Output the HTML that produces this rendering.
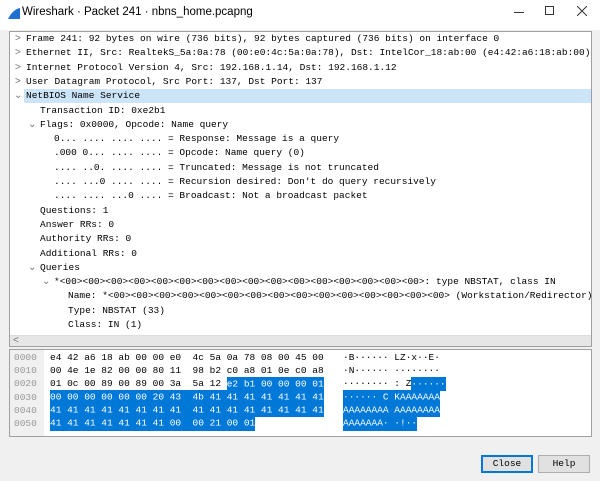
<!DOCTYPE html>
<html><head><style>
*{margin:0;padding:0;box-sizing:border-box}
body{width:600px;height:481px;background:#f0f0f0;position:relative;overflow:hidden;font-family:"Liberation Mono",monospace;font-size:9.5px;color:#000}
#title{position:absolute;left:0;top:0;width:600px;height:30px;background:#fff;font-family:"Liberation Sans",sans-serif;font-size:11.5px}
#title .t{position:absolute;left:22px;top:6px;color:#000}
#tree{position:absolute;left:9px;top:31px;width:583px;height:316px;background:#fff;border:1px solid #a0a0a0;overflow:hidden}
.r{position:absolute;height:14px;line-height:14px;white-space:pre}
.sel{background:#cce4f7}
.ch{position:absolute;color:#777;font-family:"Liberation Sans",sans-serif;font-size:10px}
#hs{position:absolute;left:0;bottom:0;width:581px;height:11px;background:#e6e6e6;border-top:1px solid #ddd}
#hex{position:absolute;left:9px;top:349px;width:583px;height:88px;background:#fff;border:1px solid #a0a0a0;overflow:hidden}
#off{position:absolute;left:0;top:0;width:34px;height:86px;background:#f0f0f0}
.h{position:absolute;white-space:pre;line-height:13.2px}
.b{background:#0078d7;color:#fff;padding:1.6px 0}
.btn{position:absolute;top:455px;width:52px;height:18px;background:#e1e1e1;border:1px solid #adadad;font-size:9.5px;text-align:center;line-height:16px}
</style></head><body>
<div id="title">
<svg style="position:absolute;left:7px;top:7px" width="14" height="13"><path d="M1 12 L13 12 L13 1 C8 2 4 6 1 12Z" fill="#1e6fd0"/></svg>
<span class="t">Wireshark · Packet 241 · nbns_home.pcapng</span>
<div style="position:absolute;left:514px;top:12px;width:10px;height:1px;background:#333"></div>
<div style="position:absolute;left:545px;top:6px;width:9px;height:9px;border:1px solid #333"></div>
<svg style="position:absolute;left:577px;top:6px" width="10" height="10"><path d="M0 0L10 10M10 0L0 10" stroke="#333" stroke-width="1"/></svg>
</div>
<div id="tree">
<div class="r" style="top:0;left:0;width:581px"><span class="ch" style="left:5px">&gt;</span><span style="position:absolute;left:16px">Frame 241: 92 bytes on wire (736 bits), 92 bytes captured (736 bits) on interface 0</span></div>
<div class="r" style="top:14.3px;left:0;width:581px"><span class="ch" style="left:5px">&gt;</span><span style="position:absolute;left:16px">Ethernet II, Src: RealtekS_5a:0a:78 (00:e0:4c:5a:0a:78), Dst: IntelCor_18:ab:00 (e4:42:a6:18:ab:00)</span></div>
<div class="r" style="top:28.6px;left:0;width:581px"><span class="ch" style="left:5px">&gt;</span><span style="position:absolute;left:16px">Internet Protocol Version 4, Src: 192.168.1.14, Dst: 192.168.1.12</span></div>
<div class="r" style="top:42.9px;left:0;width:581px"><span class="ch" style="left:5px">&gt;</span><span style="position:absolute;left:16px">User Datagram Protocol, Src Port: 137, Dst Port: 137</span></div>
<div class="r sel" style="top:57.2px;left:14px;width:567px"><span style="position:absolute;left:2px">NetBIOS Name Service</span></div>
<div class="r" style="top:57.2px;left:0"><span class="ch" style="left:4px">&#8964;</span></div>
<div class="r" style="top:71.5px;left:30px">Transaction ID: 0xe2b1</div>
<div class="r" style="top:85.8px;left:0"><span class="ch" style="left:18px">&#8964;</span><span style="position:absolute;left:30px">Flags: 0x0000, Opcode: Name query</span></div>
<div class="r" style="top:100.1px;left:44px">0... .... .... .... = Response: Message is a query</div>
<div class="r" style="top:114.4px;left:44px">.000 0... .... .... = Opcode: Name query (0)</div>
<div class="r" style="top:128.7px;left:44px">.... ..0. .... .... = Truncated: Message is not truncated</div>
<div class="r" style="top:143px;left:44px">.... ...0 .... .... = Recursion desired: Don't do query recursively</div>
<div class="r" style="top:157.3px;left:44px">.... .... ...0 .... = Broadcast: Not a broadcast packet</div>
<div class="r" style="top:171.6px;left:30px">Questions: 1</div>
<div class="r" style="top:185.9px;left:30px">Answer RRs: 0</div>
<div class="r" style="top:200.2px;left:30px">Authority RRs: 0</div>
<div class="r" style="top:214.5px;left:30px">Additional RRs: 0</div>
<div class="r" style="top:228.8px;left:0"><span class="ch" style="left:18px">&#8964;</span><span style="position:absolute;left:30px">Queries</span></div>
<div class="r" style="top:243.1px;left:0;width:600px"><span class="ch" style="left:32px">&#8964;</span><span style="position:absolute;left:44px">*&lt;00&gt;&lt;00&gt;&lt;00&gt;&lt;00&gt;&lt;00&gt;&lt;00&gt;&lt;00&gt;&lt;00&gt;&lt;00&gt;&lt;00&gt;&lt;00&gt;&lt;00&gt;&lt;00&gt;&lt;00&gt;&lt;00&gt;&lt;00&gt;: type NBSTAT, class IN</span></div>
<div class="r" style="top:257.4px;left:58px">Name: *&lt;00&gt;&lt;00&gt;&lt;00&gt;&lt;00&gt;&lt;00&gt;&lt;00&gt;&lt;00&gt;&lt;00&gt;&lt;00&gt;&lt;00&gt;&lt;00&gt;&lt;00&gt;&lt;00&gt;&lt;00&gt;&lt;00&gt; (Workstation/Redirector)</div>
<div class="r" style="top:271.7px;left:58px">Type: NBSTAT (33)</div>
<div class="r" style="top:286px;left:58px">Class: IN (1)</div>
<div id="hs"><span class="ch" style="left:3px;top:-1px">&lt;</span></div>
</div>
<div id="hex">
<div id="off"></div>
<div class="h" style="left:4px;top:1px;color:#999">0000
0010
0020
0030
0040
0050</div>
<div class="h" style="left:40px;top:1px">e4 42 a6 18 ab 00 00 e0  4c 5a 0a 78 08 00 45 00
00 4e 1e 82 00 00 80 11  98 b2 c0 a8 01 0e c0 a8
01 0c 00 89 00 89 00 3a  5a 12 <span class="b">e2 b1 00 00 00 01</span>
<span class="b">00 00 00 00 00 00 20 43  4b 41 41 41 41 41 41 41</span>
<span class="b">41 41 41 41 41 41 41 41  41 41 41 41 41 41 41 41</span>
<span class="b">41 41 41 41 41 41 41 00  00 21 00 01</span></div>
<div class="h" style="left:333px;top:1px">·B······ LZ·x··E·
·N······ ········
········ : Z<span class="b">······</span>
<span class="b">······ C KAAAAAAA</span>
<span class="b">AAAAAAAA AAAAAAAA</span>
<span class="b">AAAAAAA· ·!··</span></div>
</div>
<div class="btn" style="left:481px;border:1px solid #0078d7;box-shadow:inset 0 0 0 1px #0078d7">Close</div>
<div class="btn" style="left:538px">Help</div>
</body></html>
